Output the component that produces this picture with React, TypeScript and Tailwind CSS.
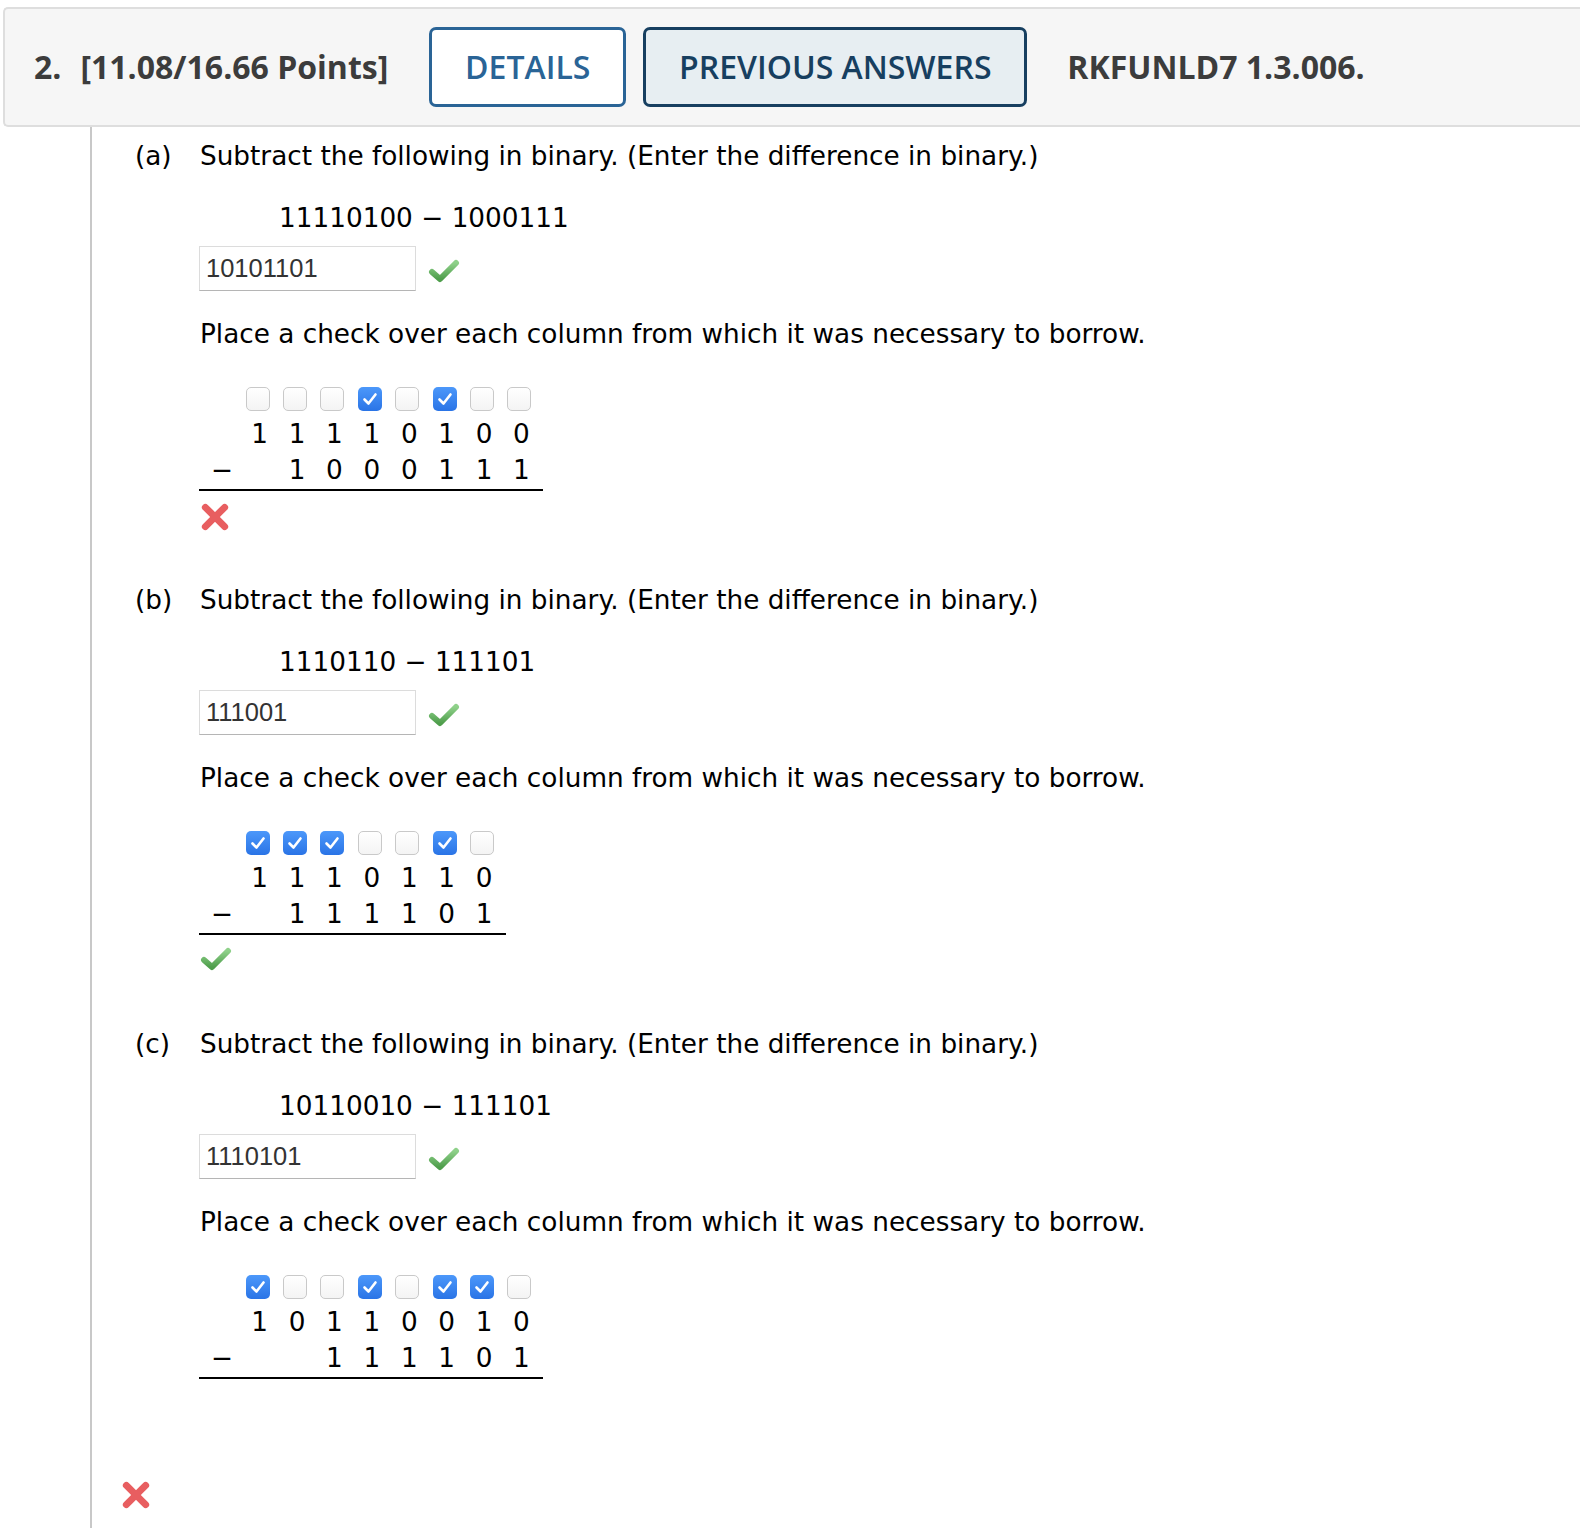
import React from 'react';

type Part = {
  label: string;
  top: string;
  bottom: string;
  answer: string;
  borrow: number[];
  tableMark: 'ok' | 'bad' | null;
};

const parts: Part[] = [
  { label: '(a)', top: '11110100', bottom: '1000111', answer: '10101101', borrow: [0, 0, 0, 1, 0, 1, 0, 0], tableMark: 'bad' },
  { label: '(b)', top: '1110110', bottom: '111101', answer: '111001', borrow: [1, 1, 1, 0, 0, 1, 0], tableMark: 'ok' },
  { label: '(c)', top: '10110010', bottom: '111101', answer: '1110101', borrow: [1, 0, 0, 1, 0, 1, 1, 0], tableMark: null },
];

function GreenCheck() {
  return (
    <svg width="32" height="26" viewBox="0 0 32 26">
      <defs>
        <linearGradient id="gc" x1="0" y1="0" x2="0" y2="1">
          <stop offset="0" stopColor="#8fd18a" />
          <stop offset="1" stopColor="#4f9e4c" />
        </linearGradient>
      </defs>
      <path d="M4 14 L12 21 L28 5" fill="none" stroke="url(#gc)" strokeWidth="6" strokeLinecap="round" strokeLinejoin="round" />
    </svg>
  );
}

function RedX() {
  return (
    <svg width="30" height="30" viewBox="0 0 28 28">
      <path d="M5 5 L23 23 M23 5 L5 23" fill="none" stroke="#e85e60" strokeWidth="6.5" strokeLinecap="round" />
    </svg>
  );
}

function Box({ on }: { on: boolean }) {
  if (on) {
    return (
      <div className="w-[24px] h-[24px] rounded-[5px] bg-gradient-to-b from-[#4c98fa] to-[#2a74e6] flex items-center justify-center">
        <svg width="16" height="14" viewBox="0 0 16 14">
          <path d="M2.5 7.5 L6.5 11.5 L13.5 2.5" fill="none" stroke="#fff" strokeWidth="2.6" strokeLinecap="round" strokeLinejoin="round" />
        </svg>
      </div>
    );
  }
  return <div className="w-[24px] h-[24px] rounded-[5px] border border-[#c9c9c9] bg-gradient-to-b from-white to-[#f4f4f4]" />;
}

function BorrowTable({ p }: { p: Part }) {
  const n = p.top.length;
  const pad = n - p.bottom.length;
  const cols = Array.from({ length: n }, (_, i) => i);
  return (
    <div className="inline-block">
      <div className="flex pl-[40px] h-[24px]">
        {cols.map(i => (
          <div key={i} className="w-[37.4px] flex justify-center">
            <Box on={p.borrow[i] === 1} />
          </div>
        ))}
      </div>
      <div className="flex pl-[42px] h-[36px] mt-[6px] items-center">
        {cols.map(i => (
          <div key={i} className="w-[37.4px] text-center">{p.top[i]}</div>
        ))}
      </div>
      <div className="flex h-[38px] pr-[3px] items-center border-b-2 border-black">
        <div className="w-[42px] pl-[4px] text-center">−</div>
        {cols.map(i => (
          <div key={i} className="w-[37.4px] text-center">{i >= pad ? p.bottom[i - pad] : ''}</div>
        ))}
      </div>
    </div>
  );
}

function Section({ p }: { p: Part }) {
  return (
    <div className="h-[444px]">
      <div className="flex h-[30px] items-center">
        <div className="w-[65px]">{p.label}</div>
        <div>Subtract the following in binary. (Enter the difference in binary.)</div>
      </div>
      <div className="pl-[144px] mt-[32px] h-[30px] flex items-center">
        {p.top} − {p.bottom}
      </div>
      <div className="pl-[64px] mt-[12px] flex items-center">
        <div className="w-[217px] h-[45px] border border-[#dcdcdc] border-b-[#b5b5b5] bg-white px-[6px] flex items-center text-[25.5px] text-[#333] [font-family:'Liberation_Sans',Arial,sans-serif]">
          {p.answer}
        </div>
        <div className="ml-[12px] mt-[4px]">
          <GreenCheck />
        </div>
      </div>
      <div className="pl-[65px] mt-[29px] h-[30px] flex items-center">
        Place a check over each column from which it was necessary to borrow.
      </div>
      <div className="pl-[64px] mt-[37px]">
        <BorrowTable p={p} />
        {p.tableMark && (
          <div className="mt-[11px] ml-[1px] h-[28px]">
            {p.tableMark === 'ok' ? <GreenCheck /> : <RedX />}
          </div>
        )}
      </div>
    </div>
  );
}

export default function App() {
  return (
    <div className="w-[1580px] h-[1528px] bg-white overflow-hidden flex flex-col text-black">
      <div className="mt-[7px] ml-[3px] h-[120px] shrink-0 border-2 border-r-0 border-[#dedede] rounded-l-[5px] bg-[#f6f6f6] flex items-center pl-[29px] [font-family:'Open_Sans',sans-serif] text-[#3c3c3c]">
        <span className="text-[32px] font-bold">2.</span>
        <span className="ml-[19px] text-[32px] font-bold">[11.08/16.66 Points]</span>
        <div className="ml-[41px] w-[197px] h-[80px] rounded-[7px] border-[3px] border-[#2a6496] bg-white flex items-center justify-center text-[32px] font-semibold text-[#2a6496]">
          DETAILS
        </div>
        <div className="ml-[17px] w-[384px] h-[80px] rounded-[7px] border-[3px] border-[#173f60] bg-[#e7eef2] flex items-center justify-center text-[32px] font-semibold text-[#173f60]">
          PREVIOUS ANSWERS
        </div>
        <span className="ml-[40px] text-[32px] font-bold">RKFUNLD7 1.3.006.</span>
      </div>
      <div className="ml-[90px] flex-1 border-l-2 border-[#c8c8c8] pl-[43px] pt-[15px] text-[26.3px] [font-family:'DejaVu_Sans',Verdana,sans-serif]">
        {parts.map(p => (
          <Section key={p.label} p={p} />
        ))}
        <div className="-ml-[14px] mt-[6px]">
          <RedX />
        </div>
      </div>
    </div>
  );
}
